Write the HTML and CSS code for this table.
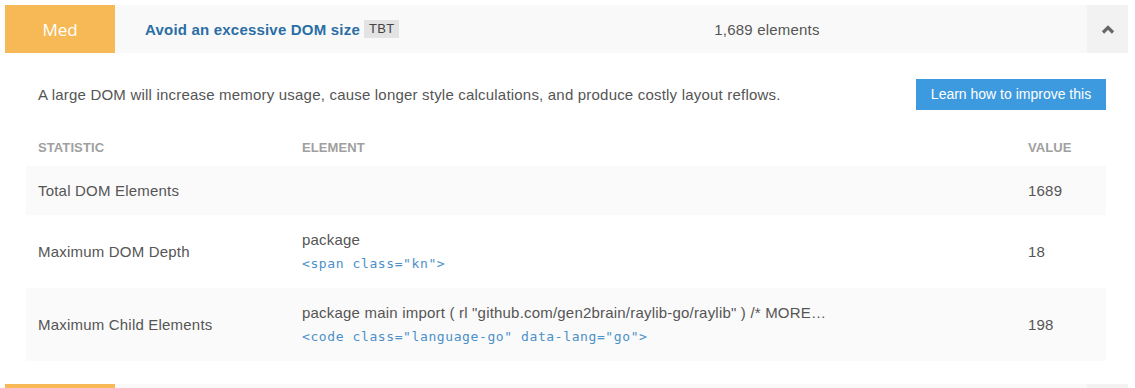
FILE: index.html
```html
<!DOCTYPE html>
<html lang="en">
<head>
<meta charset="utf-8">
<title>Avoid an excessive DOM size</title>
<link rel="stylesheet" href="styles.css">
</head>
<body>
<div class="audits">
  <section class="audit">
    <div class="audit-head">
      <div class="sev sev-med">Med</div>
      <div class="head-main">
        <div class="head-title">Avoid an excessive DOM size <span class="tag">TBT</span></div>
        <div class="head-value">1,689 elements</div>
      </div>
      <div class="toggle">
        <svg width="14" height="10" viewBox="0 0 14 10"><polyline points="2,8.5 7,3.5 12,8.5" fill="none" stroke="#666" stroke-width="3.2"/></svg>
      </div>
    </div>
    <div class="audit-body">
      <div class="desc-row">
        <p class="desc">A large DOM will increase memory usage, cause longer style calculations, and produce costly layout reflows.</p>
        <a class="btn" href="#">Learn how to improve this</a>
      </div>
      <div class="table">
        <div class="tr th">
          <div class="c-stat">Statistic</div>
          <div class="c-el">Element</div>
          <div class="c-val">Value</div>
        </div>
        <div class="tr shade">
          <div class="c-stat">Total DOM Elements</div>
          <div class="c-el"></div>
          <div class="c-val">1689</div>
        </div>
        <div class="tr">
          <div class="c-stat">Maximum DOM Depth</div>
          <div class="c-el">
            <div>package</div>
            <div class="code">&lt;span class="kn"&gt;</div>
          </div>
          <div class="c-val">18</div>
        </div>
        <div class="tr shade">
          <div class="c-stat">Maximum Child Elements</div>
          <div class="c-el">
            <div>package main import ( rl "github.com/gen2brain/raylib-go/raylib" ) /* MORE…</div>
            <div class="code">&lt;code class="language-go" data-lang="go"&gt;</div>
          </div>
          <div class="c-val">198</div>
        </div>
      </div>
    </div>
  </section>
  <section class="audit">
    <div class="audit-head">
      <div class="sev sev-med"></div>
      <div class="head-main"></div>
      <div class="toggle"></div>
    </div>
  </section>
</div>
</body>
</html>
```
FILE: styles.css
```css
* { box-sizing: border-box; }
html, body { margin: 0; padding: 0; background: #fff; }
body {
  font-family: "Liberation Sans", Arial, sans-serif;
  font-size: 15px;
  letter-spacing: 0.2px;
  color: #555;
  overflow: hidden;
}
.audits { padding: 5px 7px 0 5px; }
.audit { margin-bottom: 23px; }
.audit-head {
  display: flex;
  height: 48px;
}
.sev {
  width: 110px;
  flex: none;
  display: flex;
  align-items: center;
  justify-content: center;
  color: #fff;
  font-family: "Open Sans", sans-serif;
  font-size: 17px;
  letter-spacing: 0;
}
.sev-med { background: #f7b955; }
.head-main {
  flex: 1;
  display: flex;
  align-items: center;
  background: #f9f9f9;
}
.head-title {
  width: 552px;
  padding-left: 30px;
  font-weight: bold;
  color: #2a6ea5;
  display: flex;
  align-items: center;
}
.tag {
  display: inline-block;
  background: #e3e3e3;
  color: #444;
  font-weight: normal;
  font-size: 13px;
  letter-spacing: 0.3px;
  padding: 1px 5px;
  margin-left: 4px;
  line-height: 16px;
}
.head-value {
  width: 200px;
  text-align: center;
}
.toggle {
  width: 41px;
  flex: none;
  background: #f2f2f2;
  display: flex;
  align-items: center;
  justify-content: center;
}
.audit-body {
  margin: 0 22px 0 21px;
}
.desc-row {
  display: flex;
  justify-content: space-between;
  align-items: center;
  padding: 26px 0 0 12px;
}
.desc { margin: 0; line-height: 17px; }
.btn {
  display: block;
  width: 190px;
  height: 31px;
  line-height: 31px;
  text-align: center;
  background: #3d9ade;
  color: #fff;
  text-decoration: none;
  font-size: 14px;
  letter-spacing: 0;
}
.table { margin-top: 20px; }
.tr { display: flex; align-items: center; }
.tr > div { padding: 16px 12px; line-height: 17px; }
.c-stat { width: 264px; flex: none; }
.c-el { flex: 1; }
.c-val { width: 90px; flex: none; }
.th > div {
  padding: 0 12px;
  height: 36px;
  line-height: 36px;
  font-size: 13px;
  font-weight: bold;
  letter-spacing: 0.1px;
  text-transform: uppercase;
  color: #a0a0a0;
}
.shade { background: #fafafa; }
.code {
  margin-top: 7px;
  font-family: "DejaVu Sans Mono", monospace;
  font-size: 13px;
  letter-spacing: 0.6px;
  color: #4a90c9;
}
```
